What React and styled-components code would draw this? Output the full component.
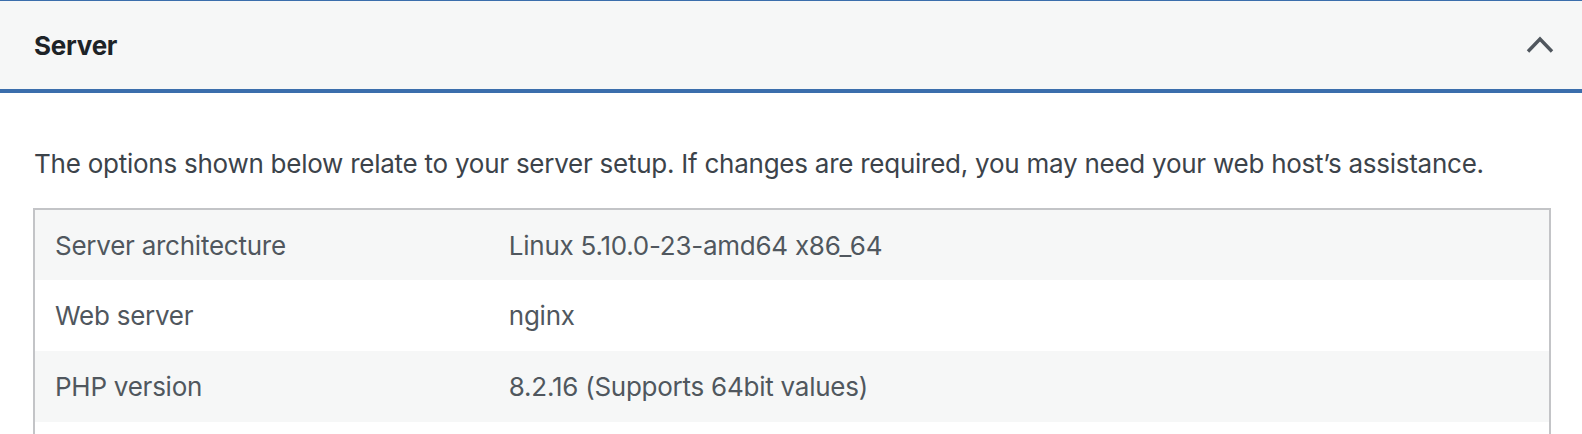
import React from "react";
import styled, { createGlobalStyle } from "styled-components";

const GlobalStyle = createGlobalStyle`
  body {
    margin: 0;
    background: #ffffff;
    font-family: Inter, "Noto Sans", sans-serif;
    font-feature-settings: "calt" 0;
    letter-spacing: -0.25px;
  }
`;

const rows = [
  { label: "Server architecture", value: "Linux 5.10.0-23-amd64 x86_64" },
  { label: "Web server", value: "nginx" },
  { label: "PHP version", value: "8.2.16 (Supports 64bit values)" },
  { label: "PHP SAPI", value: "fpm-fcgi" },
];

function App() {
  return (
    <Panel>
      <GlobalStyle />
      <Header>
        <Title>Server</Title>
        <Chevron viewBox="0 0 28 18" aria-hidden="true">
          <path d="M2 15.5 L14 3 L26 15.5" />
        </Chevron>
      </Header>
      <Body>
        <Description>
          The options shown below relate to your server setup. If changes are
          required, you may need your web host’s assistance.
        </Description>
        <Table>
          <tbody>
            {rows.map((row, i) => (
              <Row key={row.label} $striped={i % 2 === 0}>
                <Label>{row.label}</Label>
                <Value>{row.value}</Value>
              </Row>
            ))}
          </tbody>
        </Table>
      </Body>
    </Panel>
  );
}

const Panel = styled.section`
  border-top: 1px solid #3b6eac;
`;

const Header = styled.div`
  display: flex;
  align-items: center;
  justify-content: space-between;
  height: 88px;
  padding: 0 28px 0 34px;
  background: #f6f7f7;
  border-bottom: 4px solid #3b6eac;
`;

const Title = styled.h4`
  margin: 0;
  font-size: 26px;
  font-weight: 700;
  color: #1d2327;
`;

const Chevron = styled.svg`
  width: 28px;
  height: 18px;
  fill: none;
  stroke: #50575e;
  stroke-width: 3.4;
`;

const Body = styled.div`
  padding: 51px 31px 0 33px;
`;

const Description = styled.p`
  margin: 0 0 25px 1px;
  font-size: 26px;
  line-height: 39px;
  color: #3c434a;
`;

const Table = styled.table`
  width: 100%;
  border-collapse: collapse;
  border: 2px solid #c3c4c7;
  table-layout: fixed;
`;

const Row = styled.tr`
  height: 71px;
  background: ${(p) => (p.$striped ? "#f6f7f7" : "#ffffff")};
`;

const Label = styled.td`
  box-sizing: border-box;
  width: 30%;
  padding: 0 20px;
  font-size: 26px;
  color: #50575e;
`;

const Value = styled.td`
  padding: 0 20px;
  font-size: 26px;
  color: #50575e;
`;

export default App;
